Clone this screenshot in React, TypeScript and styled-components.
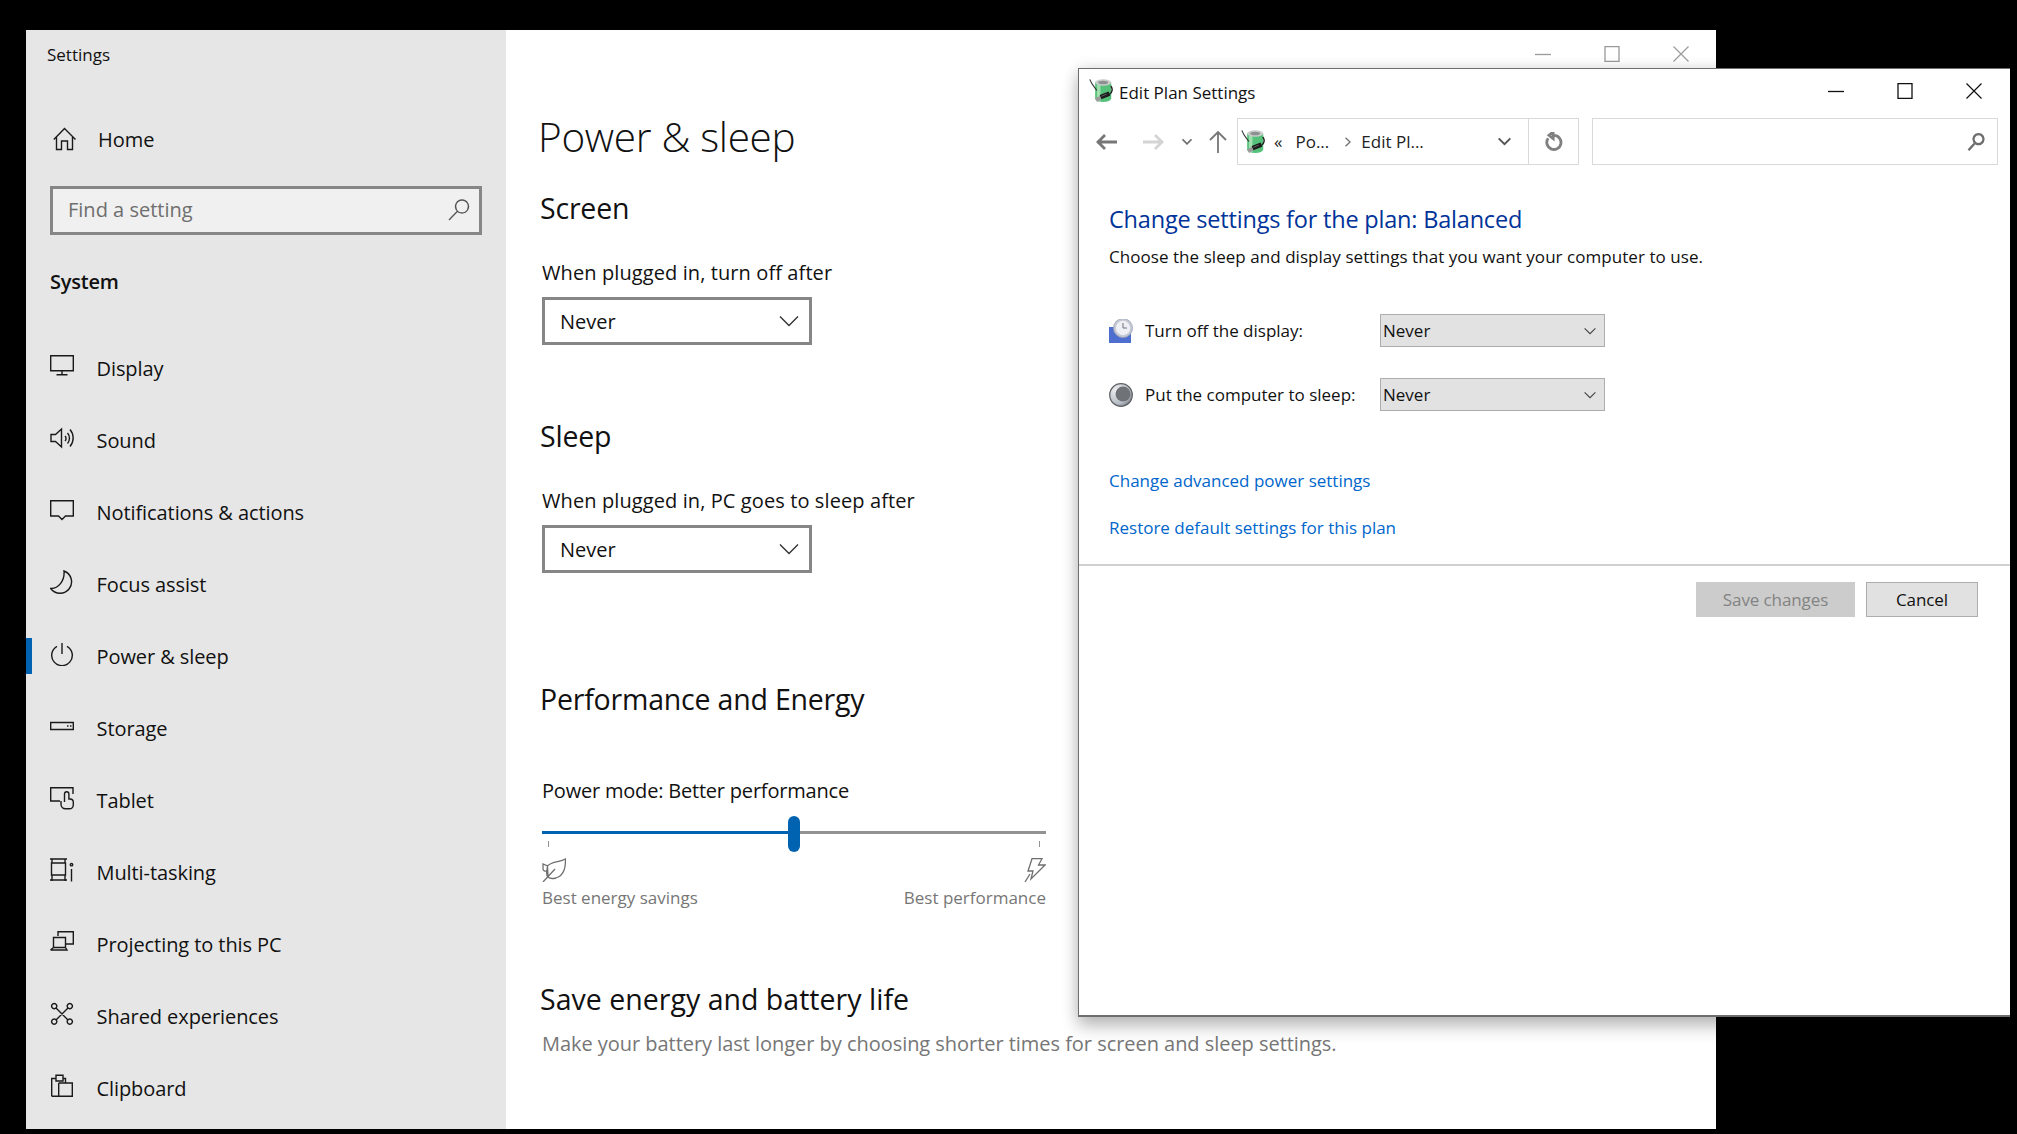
import React from 'react';
import styled, { createGlobalStyle } from 'styled-components';

const UI = '"Open Sans", "Noto Sans", sans-serif';

const Global = createGlobalStyle`
  html, body { margin: 0; padding: 0; background: #000; }
  * { box-sizing: border-box; }
  #root { width: 2017px; height: 1134px; overflow: hidden; }
`;

// desktop + windows
const Desktop = styled.div`
  position: relative;
  width: 2017px;
  height: 1134px;
  background: #000;
  padding: 30px 0 0 26px;
  font-family: ${UI};
  color: #000;
`;

const SettingsWindow = styled.div`
  display: flex;
  width: 1690px;
  height: 1099px;
  background: #fff;
`;

const Sidebar = styled.aside`
  width: 480px;
  background: #e6e6e6;
  display: flex;
  flex-direction: column;
`;

const AppTitle = styled.div`
  height: 50px;
  padding: 11px 0 0 21px;
  font-size: 17px;
  line-height: 28px;
  color: #111;
`;

const HomeRow = styled.div`
  height: 72px;
  margin-top: 23px;
  padding-left: 27px;
  display: flex;
  align-items: center;
  gap: 21px;
  font-size: 20px;
  color: #111;
`;

const SearchBox = styled.div`
  width: 432px;
  height: 49px;
  margin: 11px 0 0 24px;
  border: 3px solid #868686;
  background: #f0f0f0;
  display: flex;
  align-items: center;
  justify-content: space-between;
  padding: 0 8px 2px 15px;
  font-size: 20px;
  color: #6e6e6e;
`;

const SystemLabel = styled.div`
  height: 97px;
  padding: 30px 0 0 24px;
  font-size: 20px;
  line-height: 34px;
  font-weight: 600;
  letter-spacing: -0.2px;
  color: #111;
`;

const NavList = styled.nav`
  display: flex;
  flex-direction: column;
`;

const NavRow = styled.div<{ $active?: boolean }>`
  position: relative;
  height: 72px;
  padding-left: 24px;
  display: flex;
  align-items: center;
  font-size: 20px;
  letter-spacing: -0.08px;
  color: #111;
  ${(p) =>
    p.$active &&
    `&::before {
      content: '';
      position: absolute;
      left: 0;
      top: 18px;
      width: 6px;
      height: 36px;
      background: #0063b1;
    }`}
`;

const NavIcon = styled.span`
  width: 24px;
  height: 24px;
  margin-right: 22.5px;
  margin-top: -4px;
  display: flex;
`;

const Main = styled.main`
  flex: 1;
  padding: 0 0 0 36px;
  position: relative;
`;

const GhostControls = styled.div`
  position: absolute;
  top: 16px;
  right: 27px;
  display: flex;
  gap: 53px;
  align-items: center;
`;

const PageTitle = styled.h1`
  margin: 79px 0 0 -4px;
  height: 79px;
  font-size: 40.5px;
  line-height: 55px;
  font-weight: 300;
  letter-spacing: -0.3px;
  color: #111;
`;

const SectionTitle = styled.h2<{ $top: number; $loose?: boolean }>`
  margin: ${(p) => p.$top}px 0 0 -2px;
  height: 40px;
  font-size: 28.5px;
  line-height: 40px;
  font-weight: 400;
  letter-spacing: ${(p) => (p.$loose ? '0.02px' : '-0.2px')};
  color: #111;
`;

const FieldLabel = styled.div<{ $top: number; $tight?: boolean }>`
  margin-top: ${(p) => p.$top}px;
  height: 30px;
  font-size: 20px;
  line-height: 30px;
  letter-spacing: ${(p) => (p.$tight ? '-0.2px' : '0.1px')};
  color: #111;
`;

const Dropdown = styled.div`
  width: 270px;
  height: 48px;
  margin-top: 9px;
  border: 3px solid #868686;
  background: #fff;
  display: flex;
  align-items: center;
  justify-content: space-between;
  padding: 0 10px 0 15px;
  font-size: 20px;
  color: #111;
`;

const Slider = styled.div`
  position: relative;
  width: 504px;
  height: 36px;
  margin-top: 10px;
`;

const SliderTrack = styled.div`
  position: absolute;
  left: 0;
  right: 0;
  top: 15px;
  height: 3px;
  background: #929292;
`;

const SliderFill = styled.div`
  position: absolute;
  left: 0;
  top: 15px;
  width: 252px;
  height: 3px;
  background: #0063b1;
`;

const SliderThumb = styled.div`
  position: absolute;
  left: 246px;
  top: 0;
  width: 12px;
  height: 36px;
  border-radius: 6px;
  background: #0063b1;
`;

const SliderTicks = styled.div`
  width: 504px;
  height: 6px;
  margin-top: -11px;
  padding: 0 6px;
  display: flex;
  justify-content: space-between;
`;

const Tick = styled.i`
  width: 1px;
  height: 6px;
  background: #929292;
`;

const SliderEnds = styled.div`
  width: 504px;
  margin-top: 11px;
  display: flex;
  justify-content: space-between;
  font-size: 17px;
  line-height: 26px;
  color: #767676;
`;

const SliderEnd = styled.div<{ $right?: boolean }>`
  display: flex;
  flex-direction: column;
  gap: 3px;
  align-items: ${(p) => (p.$right ? 'flex-end' : 'flex-start')};
`;

const Description = styled.p`
  margin: 10px 0 0;
  font-size: 20px;
  line-height: 30px;
  letter-spacing: -0.04px;
  color: #767676;
`;

const Dialog = styled.div`
  position: absolute;
  left: 1078px;
  top: 68px;
  width: 932px;
  height: 949px;
  background: #fff;
  border: 1.5px solid #6d6d6d;
  border-right: 0;
  border-bottom-width: 2px;
  box-shadow: 0 10px 16px rgba(0, 0, 0, 0.24), 0 0 14px rgba(0, 0, 0, 0.12);
`;

const DialogTitleBar = styled.div`
  height: 49px;
  display: flex;
  align-items: center;
  padding: 0 28px 6px 9px;
  font-size: 17px;
  color: #111;
`;

const DialogTitle = styled.span`
  flex: 1;
  margin: 3px 0 0 6px;
`;

const WinControls = styled.div`
  display: flex;
  gap: 53px;
  align-items: center;
`;

const NavBar = styled.div`
  height: 47px;
  display: flex;
  align-items: center;
  padding-left: 16px;
`;

const NavButtons = styled.div`
  width: 142px;
  display: flex;
  align-items: center;
`;

const Spacer = styled.span<{ $w: number }>`
  width: ${(p) => p.$w}px;
`;

const AddressBar = styled.div`
  width: 342px;
  height: 47px;
  border: 1.5px solid #d9d9d9;
  display: flex;
  align-items: center;
  padding-left: 2px;
  font-size: 17px;
  color: #222;
`;

const Crumb = styled.span<{ $left: number }>`
  margin-left: ${(p) => p.$left}px;
  display: flex;
  align-items: center;
`;

const AddressChevron = styled.span`
  margin-left: auto;
  margin-right: 17px;
  display: flex;
`;

const RefreshCell = styled.span`
  width: 50px;
  height: 100%;
  border-left: 1.5px solid #d9d9d9;
  display: flex;
  align-items: center;
  justify-content: center;
`;

const DialogSearch = styled.div`
  width: 406px;
  height: 47px;
  margin-left: 13px;
  border: 1.5px solid #d9d9d9;
  display: flex;
  align-items: center;
  justify-content: flex-end;
  padding-right: 11px;
`;

const PlanBody = styled.div`
  padding: 35px 0 0 30px;
`;

const PlanHeading = styled.h2`
  margin: 0;
  height: 38px;
  font-size: 23.5px;
  line-height: 38px;
  font-weight: 400;
  letter-spacing: -0.2px;
  color: #003399;
`;

const PlanSub = styled.p`
  margin: 4px 0 0;
  height: 30px;
  font-size: 17px;
  line-height: 30px;
  letter-spacing: 0.05px;
  color: #111;
`;

const PlanRow = styled.div<{ $top: number }>`
  margin-top: ${(p) => p.$top}px;
  height: 33px;
  display: flex;
  align-items: center;
  font-size: 17px;
  color: #111;
`;

const PlanIcon = styled.span`
  width: 24px;
  height: 24px;
  margin-right: 12px;
  display: flex;
`;

const PlanLabel = styled.span`
  width: 235px;
`;

const PlanSelect = styled.div`
  width: 225px;
  height: 33px;
  border: 1.5px solid #adadad;
  background: #e2e2e2;
  display: flex;
  align-items: center;
  justify-content: space-between;
  padding: 0 8px 0 2px;
  color: #111;
`;

const PlanLink = styled.a<{ $top: number }>`
  display: block;
  margin-top: ${(p) => p.$top}px;
  height: 28px;
  font-size: 17px;
  line-height: 28px;
  color: #0066cc;
`;

const Divider = styled.div`
  height: 1.5px;
  margin-top: 22px;
  background: #d0d0d0;
`;

const ButtonRow = styled.div`
  display: flex;
  justify-content: flex-end;
  gap: 11px;
  padding: 16px 32px 0 0;
`;

const DialogButton = styled.div<{ $disabled?: boolean }>`
  width: ${(p) => (p.$disabled ? '159px' : '112px')};
  height: 35px;
  display: flex;
  align-items: center;
  justify-content: center;
  font-size: 17px;
  letter-spacing: -0.1px;
  color: ${(p) => (p.$disabled ? '#838383' : '#111')};
  background: ${(p) => (p.$disabled ? '#cccccc' : '#e1e1e1')};
  border: 1.5px solid ${(p) => (p.$disabled ? '#cccccc' : '#adadad')};
`;

// icons
const Line = ({ d, color = '#1a1a1a', width = 1.4, size = 24 }: { d: string; color?: string; width?: number; size?: number }) => (
  <svg width={size} height={size} viewBox="0 0 24 24" fill="none" stroke={color} strokeWidth={width}>
    <path d={d} />
  </svg>
);

const icons: Record<string, string> = {
  display: 'M.7 1.7H23.3V16.7H.7Z M12 16.7V21 M6.5 20.7H17.5',
  sound:
    'M1 8.5H5.5L11.5 3V21L5.5 15.5H1Z M15 10a3.5 3.5 0 0 1 0 5 M17.5 7a8 8 0 0 1 0 10.5 M20 3.5a13 13 0 0 1 0 17',
  notifications: 'M.7 2.7H23.3V18H15.5L12 21.5L8.5 18H.7Z',
  focus: 'M14 1A11.5 11.5 0 1 1 .7 18.5C8 19 15 11 14 1Z',
  power: 'M12 1V12 M7 4.3A10.3 10.3 0 1 0 17 4.3',
  storage: 'M.7 8.5H23.3V15.5H.7Z M17 12H18.5 M20 12H21.5',
  tablet:
    'M23 8V1.7H.7V15H10 M14.5 16V8a2.2 2.2 0 0 1 4.4 0V13H20a3.3 3.3 0 0 1 3.3 3.3V19a3.8 3.8 0 0 1-3.8 3.8H15.5a4.5 4.5 0 0 1-4.5-4.5V15',
  multitask:
    'M0 1H17 M2 1V5 M15 1V5 M1.5 5H15.5V17H1.5Z M0 22H17 M2 17V23 M15 17V23 M21.5 11V23.5 M21.5 5.5a1.2 1.2 0 1 0 .01 0Z',
  project: 'M8 6V1.7H23.3V14H16 M3.5 7.5H15.5V17.5H3.5Z M.5 20H17L15.5 17.5 M3.5 17.5L.5 20',
  shared:
    'M6 6L18 18 M18 6L6 18 M4.2 1.5a2.6 2.6 0 1 0 .01 0Z M19.8 1.5a2.6 2.6 0 1 0 .01 0Z M4.2 17a2.6 2.6 0 1 0 .01 0Z M19.8 17a2.6 2.6 0 1 0 .01 0Z',
  clipboard: 'M1.7 22.3V4.5H6V1.2H13V4.5H15.5V9 M8.7 9H22.3V22.3H1.7 M8.7 9V22.3 M6 4.5V7H13V4.5',
};

const HomeIcon = () => <Line d="M.8 12.5L11.5 1.5L22.5 12.5 M3.5 10V22.5H8.5V14H14.5V22.5H19.5V10" />;

const ThinSearch = () => <Line color="#555" width={1.3} d="M15 2a6.5 6.5 0 1 0 .01 0Z M10.2 13.5L2 22" />;

const Chevron = ({ color = '#333', size = 20, width = 1.4 }: { color?: string; size?: number; width?: number }) => (
  <svg width={size} height={size / 2 + 2} viewBox="0 0 20 12" fill="none" stroke={color} strokeWidth={width}>
    <path d="M1 1.5L10 10.5L19 1.5" />
  </svg>
);

const Minimize = ({ color }: { color: string }) => (
  <svg width={16} height={16} viewBox="0 0 16 16" stroke={color} strokeWidth={1.3}>
    <path d="M0 8.5H16" />
  </svg>
);

const Maximize = ({ color }: { color: string }) => (
  <svg width={16} height={16} viewBox="0 0 16 16" fill="none" stroke={color} strokeWidth={1.3}>
    <path d="M1 .7H15V15.3H1Z" />
  </svg>
);

const CloseX = ({ color }: { color: string }) => (
  <svg width={16} height={16} viewBox="0 0 16 16" fill="none" stroke={color} strokeWidth={1.2}>
    <path d="M.5 .5L15.5 15.5 M15.5 .5L.5 15.5" />
  </svg>
);

const Leaf = () => (
  <Line
    color="#6f6f6f"
    width={1.3}
    d="M1 24L13 11 M6 19C3 17 5.5 11 5.5 8L1 6V11C1 13 3 13.5 5.5 13 M5.5 8C10 3 18 4.5 23.5 1C23.5 8 23 17 14 20C10 21 7 20 6 19Z"
  />
);

const Bolt = () => <Line color="#6f6f6f" width={1.3} d="M10 .7H20L16.5 7H23L9 21L11 13H6Z M8 16L3 24" />;

const PlugBattery = ({ size = 25 }: { size?: number }) => (
  <svg width={size} height={size} viewBox="0 0 28 28">
    <path d="M8 5V23a9 4 0 0 0 18 0V5Z" fill="#55c17a" />
    <path d="M10 7V24a6 3 0 0 0 4 2V8Z" fill="#9fe0ae" />
    <ellipse cx="17" cy="5" rx="9" ry="3.6" fill="#c9cccb" />
    <ellipse cx="17" cy="5" rx="5.5" ry="2" fill="#8c908e" />
    <path d="M2 1.5C4 7 7 10 10 14" fill="none" stroke="#333" strokeWidth="1.2" />
    <path d="M25.5 9C28 12 27.5 16 24 18.5" fill="none" stroke="#222" strokeWidth="1.6" />
    <path d="M14 21.5L24 17.5" stroke="#1c1c1c" strokeWidth="5" />
    <path d="M9 25L14 22" stroke="#9a9a9a" strokeWidth="4.5" />
    <path d="M15 20.5L21 18" stroke="#666" strokeWidth="1" />
  </svg>
);

const ClockMonitor = () => (
  <svg width={24} height={24} viewBox="0 0 24 24">
    <rect x="0" y="8" width="22" height="16" fill="#4f6fd0" />
    <circle cx="14" cy="9" r="9.5" fill="#c4c9d4" stroke="#9aa2b2" strokeWidth="0.8" />
    <circle cx="14" cy="9" r="7.2" fill="#eef0f5" />
    <path d="M14 4V9H18" fill="none" stroke="#6a7280" strokeWidth="1" />
  </svg>
);

const MoonOrb = () => (
  <svg width={24} height={24} viewBox="0 0 24 24">
    <defs>
      <radialGradient id="orb" cx="30%" cy="30%" r="85%">
        <stop offset="0" stopColor="#eef0f2" />
        <stop offset="0.7" stopColor="#b5bbc4" />
        <stop offset="1" stopColor="#6a6d70" />
      </radialGradient>
    </defs>
    <circle cx="12" cy="12" r="11.3" fill="url(#orb)" stroke="#5d6064" strokeWidth="1.2" />
    <circle cx="14" cy="11" r="7.5" fill="#6f7276" />
  </svg>
);

const navItems = [
  { key: 'display', label: 'Display' },
  { key: 'sound', label: 'Sound' },
  { key: 'notifications', label: 'Notifications & actions' },
  { key: 'focus', label: 'Focus assist' },
  { key: 'power', label: 'Power & sleep', active: true },
  { key: 'storage', label: 'Storage' },
  { key: 'tablet', label: 'Tablet' },
  { key: 'multitask', label: 'Multi-tasking' },
  { key: 'project', label: 'Projecting to this PC' },
  { key: 'shared', label: 'Shared experiences' },
  { key: 'clipboard', label: 'Clipboard' },
];

export default function App() {
  return (
    <Desktop>
      <Global />
      <SettingsWindow>
        <Sidebar>
          <AppTitle>Settings</AppTitle>
          <HomeRow>
            <HomeIcon />
            Home
          </HomeRow>
          <SearchBox>
            Find a setting
            <ThinSearch />
          </SearchBox>
          <SystemLabel>System</SystemLabel>
          <NavList>
            {navItems.map((item) => (
              <NavRow key={item.key} $active={item.active}>
                <NavIcon>
                  <Line d={icons[item.key]} />
                </NavIcon>
                {item.label}
              </NavRow>
            ))}
          </NavList>
        </Sidebar>
        <Main>
          <GhostControls>
            <Minimize color="#9a9a9a" />
            <Maximize color="#9a9a9a" />
            <CloseX color="#9a9a9a" />
          </GhostControls>
          <PageTitle>Power &amp; sleep</PageTitle>
          <SectionTitle $top={0}>Screen</SectionTitle>
          <FieldLabel $top={30}>When plugged in, turn off after</FieldLabel>
          <Dropdown>
            Never
            <Chevron />
          </Dropdown>
          <SectionTitle $top={71}>Sleep</SectionTitle>
          <FieldLabel $top={30}>When plugged in, PC goes to sleep after</FieldLabel>
          <Dropdown>
            Never
            <Chevron />
          </Dropdown>
          <SectionTitle $top={106}>Performance and Energy</SectionTitle>
          <FieldLabel $top={57} $tight>
            Power mode: Better performance
          </FieldLabel>
          <Slider>
            <SliderTrack />
            <SliderFill />
            <SliderThumb />
          </Slider>
          <SliderTicks>
            <Tick />
            <Tick />
          </SliderTicks>
          <SliderEnds>
            <SliderEnd>
              <Leaf />
              Best energy savings
            </SliderEnd>
            <SliderEnd $right>
              <Bolt />
              Best performance
            </SliderEnd>
          </SliderEnds>
          <SectionTitle $top={68} $loose>
            Save energy and battery life
          </SectionTitle>
          <Description>Make your battery last longer by choosing shorter times for screen and sleep settings.</Description>
        </Main>
      </SettingsWindow>

      <Dialog>
        <DialogTitleBar>
          <PlugBattery />
          <DialogTitle>Edit Plan Settings</DialogTitle>
          <WinControls>
            <Minimize color="#111" />
            <Maximize color="#111" />
            <CloseX color="#111" />
          </WinControls>
        </DialogTitleBar>
        <NavBar>
          <NavButtons>
            <Line color="#767676" width={2.8} d="M2 12H22 M10 5L3 12L10 19" />
            <Spacer $w={22} />
            <Line color="#d4d4d4" width={2.8} d="M2 12H22 M14 5L21 12L14 19" />
            <Spacer $w={17} />
            <Chevron color="#6e6e6e" size={10} width={3.4} />
            <Spacer $w={14} />
            <Line color="#767676" width={1.8} d="M12 2V23 M4 10L12 2L20 10" />
          </NavButtons>
          <AddressBar>
            <PlugBattery size={25} />
            <Crumb $left={9}>«</Crumb>
            <Crumb $left={13}>Po...</Crumb>
            <Crumb $left={14}>
              <Line color="#6e6e6e" width={3} size={10} d="M6 2L17 12L6 22" />
            </Crumb>
            <Crumb $left={8}>Edit Pl...</Crumb>
            <AddressChevron>
              <Chevron color="#555" size={13} width={3} />
            </AddressChevron>
            <RefreshCell>
              <Line color="#808080" width={3.4} size={20} d="M12 4a8.5 8.5 0 1 1-7 3.5 M11 0V8L6 4Z" />
            </RefreshCell>
          </AddressBar>
          <DialogSearch>
            <Line color="#6e6e6e" width={2.8} size={20} d="M15 2.5a6 6 0 1 0 .01 0Z M10 14L3 22" />
          </DialogSearch>
        </NavBar>
        <PlanBody>
          <PlanHeading>Change settings for the plan: Balanced</PlanHeading>
          <PlanSub>Choose the sleep and display settings that you want your computer to use.</PlanSub>
          <PlanRow $top={42}>
            <PlanIcon>
              <ClockMonitor />
            </PlanIcon>
            <PlanLabel>Turn off the display:</PlanLabel>
            <PlanSelect>
              Never
              <Chevron size={12} color="#444" width={1.8} />
            </PlanSelect>
          </PlanRow>
          <PlanRow $top={31}>
            <PlanIcon>
              <MoonOrb />
            </PlanIcon>
            <PlanLabel>Put the computer to sleep:</PlanLabel>
            <PlanSelect>
              Never
              <Chevron size={12} color="#444" width={1.8} />
            </PlanSelect>
          </PlanRow>
          <PlanLink $top={56}>Change advanced power settings</PlanLink>
          <PlanLink $top={19}>Restore default settings for this plan</PlanLink>
        </PlanBody>
        <Divider />
        <ButtonRow>
          <DialogButton $disabled>Save changes</DialogButton>
          <DialogButton>Cancel</DialogButton>
        </ButtonRow>
      </Dialog>
    </Desktop>
  );
}
